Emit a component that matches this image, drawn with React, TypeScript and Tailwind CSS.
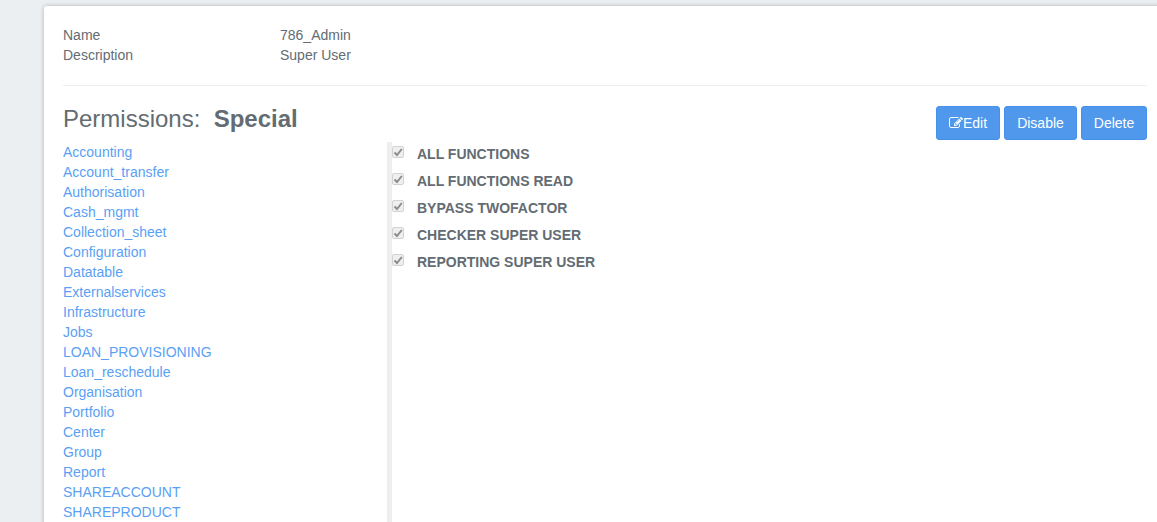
import React from 'react';

const groups = [
  'Accounting', 'Account_transfer', 'Authorisation', 'Cash_mgmt', 'Collection_sheet', 'Configuration',
  'Datatable', 'Externalservices', 'Infrastructure', 'Jobs', 'LOAN_PROVISIONING', 'Loan_reschedule',
  'Organisation', 'Portfolio', 'Center', 'Group', 'Report', 'SHAREACCOUNT', 'SHAREPRODUCT',
];

const permissions = ['ALL FUNCTIONS', 'ALL FUNCTIONS READ', 'BYPASS TWOFACTOR', 'CHECKER SUPER USER', 'REPORTING SUPER USER'];

const btnClass = 'h-[34px] rounded-[3px] border border-[#4590e8] bg-[#5098ec] text-[14px] text-white flex items-center justify-center';

export default function App() {
  return (
    <div className="h-[522px] overflow-hidden bg-[#ebeff2] pl-[44px] pt-[6px] font-['Liberation_Sans',sans-serif] text-[14px] leading-[20px] text-[#636c72]">
      <div className="mr-[-9px] h-[600px] rounded-[3px] bg-white px-[19px] pt-[19px] shadow-[0_0_4px_rgba(0,0,0,0.25)]">
        {/* Role details */}
        <div className="flex">
          <div className="w-[217px]">
            <div>Name</div>
            <div>Description</div>
          </div>
          <div>
            <div>786_Admin</div>
            <div>Super User</div>
          </div>
        </div>
        <hr className="mt-[20px] border-t border-[#eeeeee]" />

        <div className="mt-[20px] flex items-start justify-between">
          <h3 className="text-[24px] leading-[26px]">
            Permissions:&nbsp; <strong className="font-bold">Special</strong>
          </h3>
          <div className="flex gap-[4px]">
            <button className={`${btnClass} w-[64px]`}>
              <svg viewBox="0 128 1792 1408" className="mb-px h-[11px] w-[14px]" fill="currentColor">
                <path d="M888 1184l116-116-152-152-116 116v56h96v96h56zm440-720q-16-16-33 1l-350 350q-17 17-1 33t33-1l350-350q17-17 1-33zm80 594v190q0 119-84.5 203.5t-203.5 84.5h-832q-119 0-203.5-84.5t-84.5-203.5v-832q0-119 84.5-203.5t203.5-84.5h832q63 0 117 25 15 7 18 23 3 17-9 29l-49 49q-14 14-32 8-23-6-45-6h-832q-66 0-113 47t-47 113v832q0 66 47 113t113 47h832q66 0 113-47t47-113v-126q0-13 9-22l64-64q15-15 35-7t20 29zm-96-738l288 288-672 672h-288v-288zm444 132l-92 92-288-288 92-92q28-28 68-28t68 28l152 152q28 28 28 68t-28 68z" />
              </svg>
              Edit
            </button>
            <button className={`${btnClass} w-[73px]`}>Disable</button>
            <button className={`${btnClass} w-[66px]`}>Delete</button>
          </div>
        </div>

        <div className="mt-[2px] flex">
          {/* Permission groups */}
          <ul className="w-[324px]">
            {groups.map((g) => (
              <li key={g}>
                <a className="text-[#5a9ff5]">{g}</a>
              </li>
            ))}
          </ul>
          {/* Selected permissions */}
          <div className="flex-1 border-l-[5px] border-[#eeeeee]">
            <div className="mt-[-2px]">
              {permissions.map((p) => (
                <div key={p} className="flex h-[27px] items-center">
                  <span className="mb-[4px] flex h-[12px] w-[12px] items-center justify-center rounded-[2px] border border-[#d2d2d2] bg-[#efefef]">
                    <svg viewBox="0 0 10 10" className="h-[10px] w-[10px]">
                      <path d="M1.5 5.5 L4 8 L8.8 2" fill="none" stroke="#8c8c8c" strokeWidth="2" />
                    </svg>
                  </span>
                  <span className="ml-[13px] font-bold">{p}</span>
                </div>
              ))}
            </div>
          </div>
        </div>
      </div>
    </div>
  );
}
